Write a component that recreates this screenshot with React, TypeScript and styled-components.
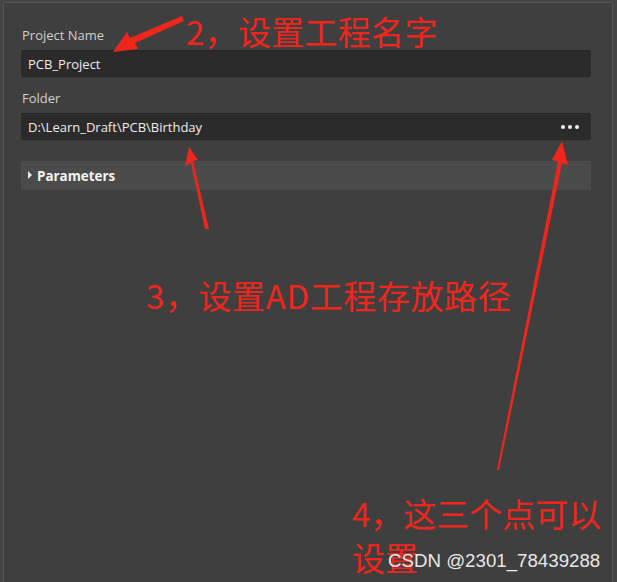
import React from "react";
import styled, { createGlobalStyle } from "styled-components";

const Global = createGlobalStyle`
  html, body { margin: 0; padding: 0; background: #454545; }
  body { width: 617px; height: 582px; overflow: hidden; }
  * { box-sizing: border-box; }
`;

const Stage = styled.div`
  position: relative;
  width: 617px;
  height: 582px;
  padding: 2px 4px 0 3px;
  background: #454545;
  font-family: "Open Sans", "Noto Sans", sans-serif;
`;

const Panel = styled.div`
  height: 100%;
  background: #3f3f3f;
  border: 1px solid #555555;
  border-bottom: none;
  padding: 24px 21px 0 17px;
  display: flex;
  flex-direction: column;
`;

const Field = styled.div<{ $after?: number }>`
  display: flex;
  flex-direction: column;
  gap: 7px;
  margin-bottom: ${(p) => p.$after ?? 0}px;
`;

const Label = styled.div`
  font-size: 13px;
  line-height: 16px;
  color: #cfcfcf;
  padding-left: 1px;
`;

const Input = styled.div`
  height: 27px;
  background: #2b2b2b;
  border-radius: 3px;
  box-shadow: inset 0 1px 0 #262626, 0 1px 0 #383838;
  display: flex;
  align-items: center;
  justify-content: space-between;
  padding: 0 12px 0 7px;
  font-size: 13px;
  color: #ececec;
`;

const Dots = styled.span`
  display: flex;
  gap: 3px;
  & > i {
    width: 4px;
    height: 4px;
    border-radius: 50%;
    background: #f2f2f2;
  }
`;

const Section = styled.div`
  height: 29px;
  background: #4b4b4b;
  display: flex;
  align-items: center;
  gap: 5px;
  padding-left: 7px;
  font-size: 13.4px;
  font-weight: 700;
  color: #f4f4f4;
`;

const Caret = styled.span`
  width: 0;
  height: 0;
  border-top: 4px solid transparent;
  border-bottom: 4px solid transparent;
  border-left: 4px solid #e8e8e8;
  margin-top: -1px;
`;

const Note = styled.div<{ $x: number; $y: number; $track?: number }>`
  position: absolute;
  left: ${(p) => p.$x}px;
  top: ${(p) => p.$y}px;
  font-family: "Noto Sans CJK SC", "Noto Sans", sans-serif;
  font-size: 33px;
  line-height: 38px;
  letter-spacing: ${(p) => p.$track ?? 0}px;
  color: #f0261d;
  white-space: nowrap;
`;

const Watermark = styled.div`
  position: absolute;
  left: 388px;
  top: 549px;
  font-family: "Liberation Sans", Arial, sans-serif;
  font-size: 18.7px;
  line-height: 24px;
  color: rgba(255, 255, 255, 0.9);
  white-space: nowrap;
`;

const Arrows = styled.svg`
  position: absolute;
  left: 0;
  top: 0;
  pointer-events: none;
`;

export default function App() {
  return (
    <>
      <Global />
      <Stage>
        <Panel>
          <Field $after={13}>
            <Label>Project Name</Label>
            <Input>PCB_Project</Input>
          </Field>
          <Field $after={21}>
            <Label>Folder</Label>
            <Input>
              <span>D:\Learn_Draft\PCB\Birthday</span>
              <Dots>
                <i />
                <i />
                <i />
              </Dots>
            </Input>
          </Field>
          <Section>
            <Caret />
            Parameters
          </Section>
        </Panel>

        <Arrows width="617" height="582" viewBox="0 0 617 582">
          {/* arrow toward the project name field */}
          <polygon points="182,16 184,21 135,43 138,49 113,52 127,32 130,38" fill="#f0261d" />
          {/* arrow toward the folder path */}
          <polygon points="209,229 205,229 191,163 185,166 189,147 198,160 193,161" fill="#f0261d" />
          {/* arrow toward the browse dots */}
          <polygon points="497,470 499,470 562,163 568,165 562,141 552,160 558,162" fill="#f0261d" />
        </Arrows>

        <Note $x={186} $y={12} $track={0.3}>2，设置工程名字</Note>
        <Note $x={146} $y={276} $track={0.6}>3，设置AD工程存放路径</Note>
        <Note $x={352} $y={494}>4，这三个点可以</Note>
        <Note $x={352} $y={538}>设置</Note>
        <Watermark>CSDN @2301_78439288</Watermark>
      </Stage>
    </>
  );
}
